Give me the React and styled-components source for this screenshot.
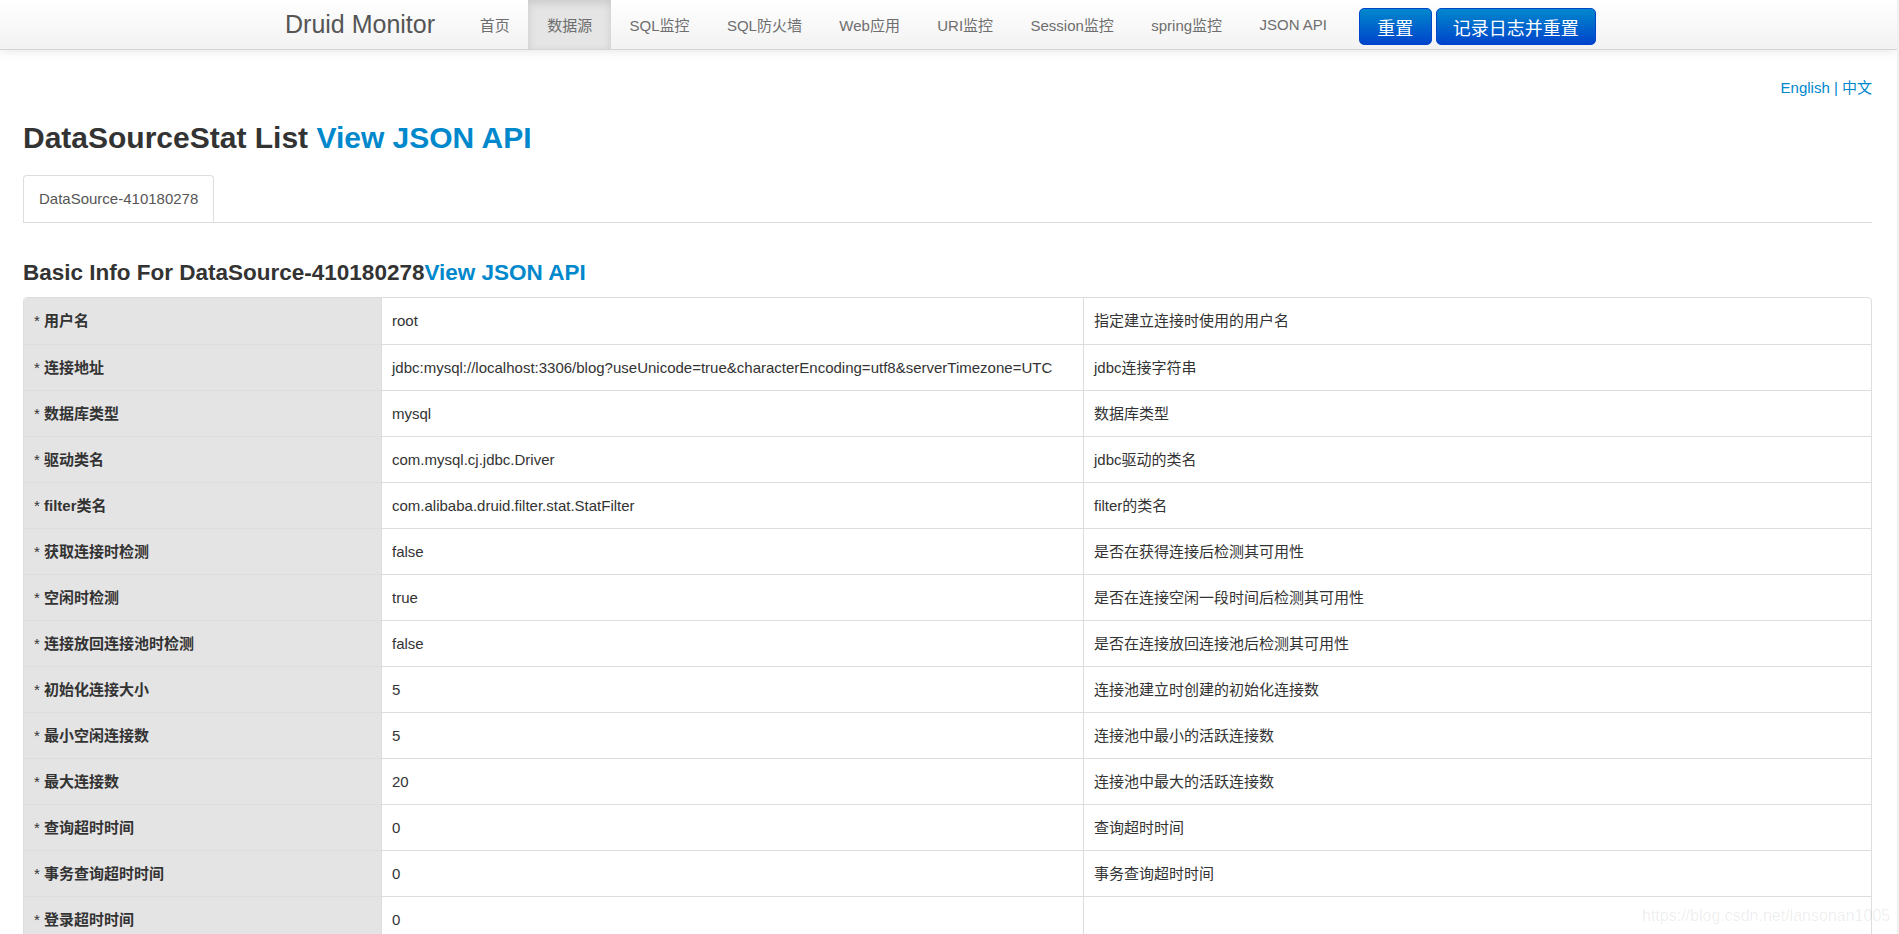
import React from "react";
import styled, { createGlobalStyle } from "styled-components";

const navItems = [
  "首页",
  "数据源",
  "SQL监控",
  "SQL防火墙",
  "Web应用",
  "URI监控",
  "Session监控",
  "spring监控",
  "JSON API",
];

const rows = [
  ["用户名", "root", "指定建立连接时使用的用户名"],
  [
    "连接地址",
    "jdbc:mysql://localhost:3306/blog?useUnicode=true&characterEncoding=utf8&serverTimezone=UTC",
    "jdbc连接字符串",
  ],
  ["数据库类型", "mysql", "数据库类型"],
  ["驱动类名", "com.mysql.cj.jdbc.Driver", "jdbc驱动的类名"],
  ["filter类名", "com.alibaba.druid.filter.stat.StatFilter", "filter的类名"],
  ["获取连接时检测", "false", "是否在获得连接后检测其可用性"],
  ["空闲时检测", "true", "是否在连接空闲一段时间后检测其可用性"],
  ["连接放回连接池时检测", "false", "是否在连接放回连接池后检测其可用性"],
  ["初始化连接大小", "5", "连接池建立时创建的初始化连接数"],
  ["最小空闲连接数", "5", "连接池中最小的活跃连接数"],
  ["最大连接数", "20", "连接池中最大的活跃连接数"],
  ["查询超时时间", "0", "查询超时时间"],
  ["事务查询超时时间", "0", "事务查询超时时间"],
  ["登录超时时间", "0", ""],
];

const GlobalStyle = createGlobalStyle`
  html, body {
    margin: 0;
    height: 100%;
    overflow: hidden;
    background: #fff;
  }
  body {
    font-family: "Liberation Sans", "Noto Sans CJK SC", Arial, sans-serif;
    font-size: 15px;
    color: #333;
  }
`;

const Page = styled.div`
  display: flex;
  height: 934px;
  overflow: hidden;
  position: relative;
`;

const Main = styled.div`
  flex: 1;
  min-width: 0;
`;

const ScrollEdge = styled.div`
  width: 2px;
  background: #f1f1f1;
`;

const Navbar = styled.nav`
  display: flex;
  align-items: center;
  height: 49px;
  padding-left: 285px;
  background: linear-gradient(to bottom, #ffffff, #f2f2f2);
  border-bottom: 1px solid #d4d4d4;
  box-shadow: 0 1px 10px rgba(0, 0, 0, 0.1);
`;

const Brand = styled.a`
  font-size: 25px;
  color: #555;
  margin-right: 26px;
`;

const NavList = styled.ul`
  display: flex;
  align-self: stretch;
  list-style: none;
  margin: 0 9px 0 0;
  padding: 0;
`;

const NavItem = styled.li`
  display: flex;
  align-items: center;
  padding: 0 18.7px;
  color: #6e6e6e;
  ${(p) =>
    p.$active &&
    `
    background: #e5e5e5;
    box-shadow: inset 0 3px 8px rgba(0, 0, 0, 0.125);
  `}
`;

const ResetButton = styled.button`
  box-sizing: border-box;
  width: ${(p) => p.$w};
  height: 37px;
  padding: 0;
  margin: 4px 0 0 4px;
  font-family: inherit;
  font-size: 18px;
  color: #fff;
  background: linear-gradient(to bottom, #0088cc, #0044cc);
  border: 1px solid #0044cc;
  border-radius: 5px;
`;

const Content = styled.div`
  padding: 0 2px 0 23px;
  margin-right: 23px;
`;

const LangBar = styled.div`
  padding-top: 28px;
  height: 20px;
  line-height: 20px;
  text-align: right;
  color: #0088cc;
`;

const PageTitle = styled.h2`
  margin: 20px 0 0;
  font-size: 30px;
  line-height: 40px;
  font-weight: bold;
  color: #333;
`;

const Link = styled.a`
  color: #0088cc;
`;

const Tabs = styled.div`
  display: flex;
  margin-top: 17px;
  border-bottom: 1px solid #ddd;
`;

const Tab = styled.div`
  padding: 13px 15px;
  line-height: 20px;
  color: #555;
  background: #fff;
  border: 1px solid #ddd;
  border-bottom: none;
  border-radius: 4px 4px 0 0;
`;

const SectionTitle = styled.h3`
  margin: 34px 0 0;
  font-size: 22.5px;
  line-height: 32px;
  font-weight: bold;
  color: #333;
`;

const Table = styled.table`
  width: 100%;
  margin-top: 8px;
  table-layout: fixed;
  border-collapse: separate;
  border-spacing: 0;
  border: 1px solid #ddd;
  border-radius: 4px;
`;

const Row = styled.tr`
  height: 46px;
`;

const LabelCell = styled.td`
  box-sizing: border-box;
  width: 357px;
  padding: 0 10px;
  background: #e4e4e4;
  line-height: 20px;
  border-top: ${(p) => (p.$first ? "none" : "1px solid #ddd")};
  border-top-left-radius: ${(p) => (p.$first ? "4px" : "0")};
`;

const Cell = styled.td`
  box-sizing: border-box;
  padding: 0 10px;
  line-height: 20px;
  border-left: 1px solid #ddd;
  border-top: ${(p) => (p.$first ? "none" : "1px solid #ddd")};
  width: ${(p) => p.$w || "auto"};
`;

const Watermark = styled.div`
  position: absolute;
  left: 1642px;
  top: 906px;
  font-size: 16px;
  line-height: 20px;
  color: rgba(0, 0, 0, 0.08);
  white-space: nowrap;
`;

export default function App() {
  return (
    <>
      <GlobalStyle />
      <Page>
        <Main>
          <Navbar>
            <Brand>Druid Monitor</Brand>
            <NavList>
              {navItems.map((item) => (
                <NavItem key={item} $active={item === "数据源"}>
                  {item}
                </NavItem>
              ))}
            </NavList>
            <ResetButton $w="73px">重置</ResetButton>
            <ResetButton $w="160px">记录日志并重置</ResetButton>
          </Navbar>
          <Content>
            <LangBar>English | 中文</LangBar>
            <PageTitle>
              DataSourceStat List <Link>View JSON API</Link>
            </PageTitle>
            <Tabs>
              <Tab>DataSource-410180278</Tab>
            </Tabs>
            <SectionTitle>
              Basic Info For DataSource-410180278<Link>View JSON API</Link>
            </SectionTitle>
            <Table>
              <tbody>
                {rows.map(([label, value, desc], i) => (
                  <Row key={label}>
                    <LabelCell $first={i === 0}>
                      * <strong>{label}</strong>
                    </LabelCell>
                    <Cell $first={i === 0} $w="702px">
                      {value}
                    </Cell>
                    <Cell $first={i === 0}>{desc}</Cell>
                  </Row>
                ))}
              </tbody>
            </Table>
          </Content>
        </Main>
        <ScrollEdge />
        <Watermark>https://blog.csdn.net/lansonan1005</Watermark>
      </Page>
    </>
  );
}
